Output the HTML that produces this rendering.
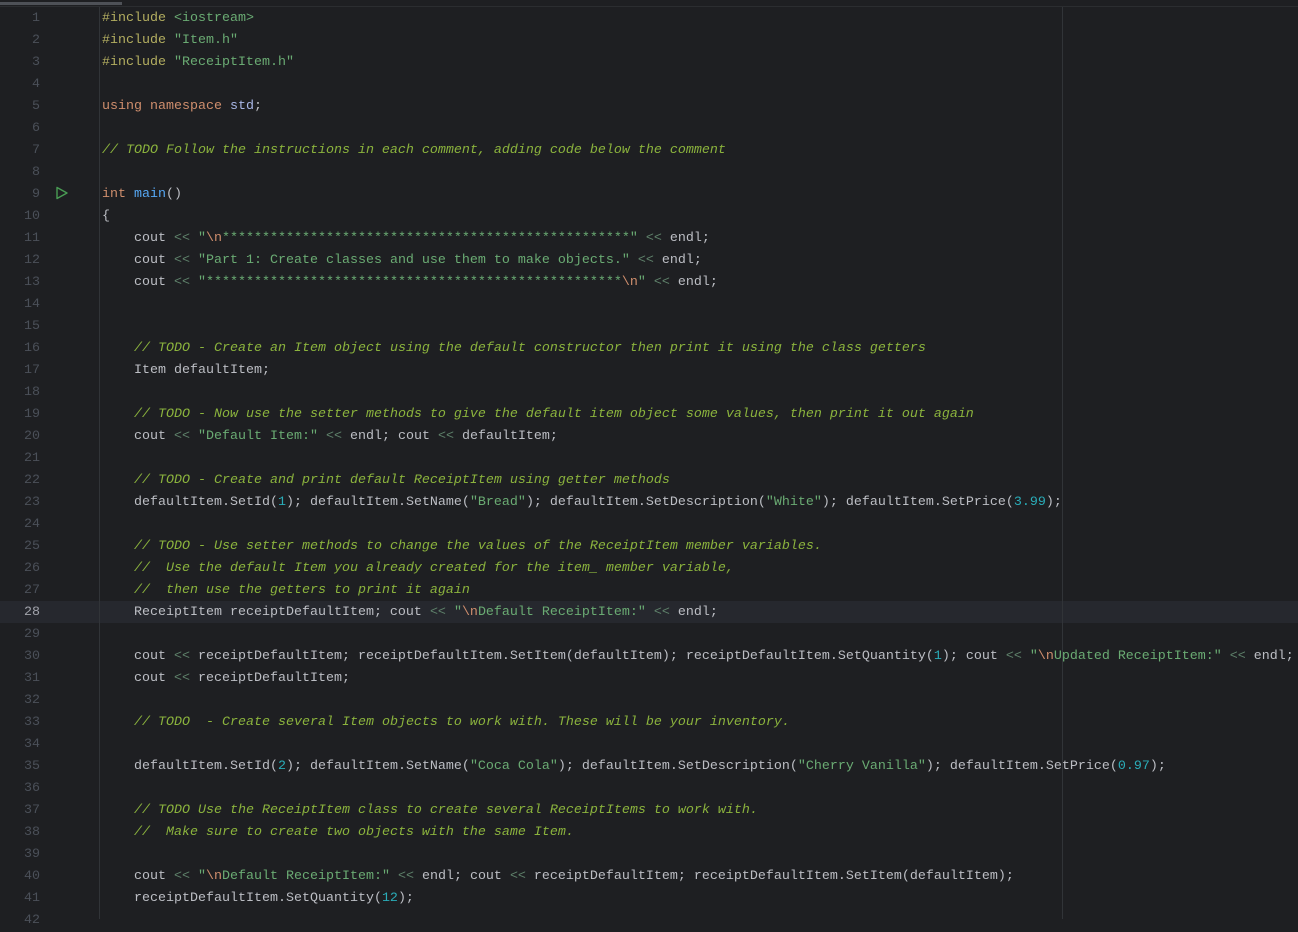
<!DOCTYPE html>
<html><head><meta charset="utf-8"><style>
html,body{margin:0;padding:0;width:1298px;height:919px;overflow:hidden;background:#1e1f22;}
#top{position:absolute;left:0;top:0;width:1298px;height:6px;background:#1e1f22;border-bottom:1px solid #2b2d30;}
#tab{position:absolute;left:0;top:2px;width:122px;height:3px;background:#4e5157;}
#sep{position:absolute;left:99px;top:7px;width:1px;height:912px;background:#313438;}
#margin{position:absolute;left:1062px;top:7px;width:1px;height:912px;background:#313438;}
#cur{position:absolute;left:0;top:601px;width:1298px;height:22px;background:#26282e;}
.ln{position:absolute;left:0;width:40px;text-align:right;font:13.333px "Liberation Mono",monospace;color:#4b5059;line-height:22px;}
.code{position:absolute;left:102px;font:13.333px "Liberation Mono",monospace;color:#bcbec4;line-height:22px;white-space:pre;}
.k{color:#cf8e6d}.s{color:#6aab73}.e{color:#cf8e6d}.o{color:#5f826b}.n{color:#2aacb8}.m{color:#b3ae60}.f{color:#56a8f5}.c{color:#7a7e85;font-style:italic}.t{color:#8bb33d;font-style:italic}.st{color:#c77dbb}
#run{position:absolute;left:55px;top:186px;}
</style></head><body>
<div id="top"></div><div id="tab"></div>
<div id="cur"></div>
<div id="sep"></div><div id="margin"></div>
<svg id="run" width="14" height="14" viewBox="0 0 14 14"><path d="M2 1.5 L12 7 L2 12.5 Z" fill="none" stroke="#499c54" stroke-width="1.4" stroke-linejoin="round"/></svg>
<div class="ln" style="top:8px">1<br>2<br>3<br>4<br>5<br>6<br>7<br>8<br>9<br>10<br>11<br>12<br>13<br>14<br>15<br>16<br>17<br>18<br>19<br>20<br>21<br>22<br>23<br>24<br>25<br>26<br>27<br><span style="color:#a1a3ab">28</span><br>29<br>30<br>31<br>32<br>33<br>34<br>35<br>36<br>37<br>38<br>39<br>40<br>41<br>42</div>
<div class="code" style="top:8px"><span class="m">#include</span> <span class="s">&lt;iostream&gt;</span>
<span class="m">#include</span> <span class="s">"Item.h"</span>
<span class="m">#include</span> <span class="s">"ReceiptItem.h"</span>

<span class="k">using namespace</span> <span style="color:#a9b7e6">std</span>;

<span class="t">// TODO Follow the instructions in each comment, adding code below the comment</span>

<span class="k">int</span> <span class="f">main</span>()
{
    cout <span class="o">&lt;&lt;</span> <span class="s">"<span class="e">\n</span>***************************************************"</span> <span class="o">&lt;&lt;</span> endl;
    cout <span class="o">&lt;&lt;</span> <span class="s">"Part 1: Create classes and use them to make objects."</span> <span class="o">&lt;&lt;</span> endl;
    cout <span class="o">&lt;&lt;</span> <span class="s">"****************************************************<span class="e">\n</span>"</span> <span class="o">&lt;&lt;</span> endl;


    <span class="t">// TODO - Create an Item object using the default constructor then print it using the class getters</span>
    Item defaultItem;

    <span class="t">// TODO - Now use the setter methods to give the default item object some values, then print it out again</span>
    cout <span class="o">&lt;&lt;</span> <span class="s">"Default Item:"</span> <span class="o">&lt;&lt;</span> endl; cout <span class="o">&lt;&lt;</span> defaultItem;

    <span class="t">// TODO - Create and print default ReceiptItem using getter methods</span>
    defaultItem.SetId(<span class="n">1</span>); defaultItem.SetName(<span class="s">"Bread"</span>); defaultItem.SetDescription(<span class="s">"White"</span>); defaultItem.SetPrice(<span class="n">3.99</span>);

    <span class="t">// TODO - Use setter methods to change the values of the ReceiptItem member variables.</span>
    <span class="t">//  Use the default Item you already created for the item_ member variable,</span>
    <span class="t">//  then use the getters to print it again</span>
    ReceiptItem receiptDefaultItem; cout <span class="o">&lt;&lt;</span> <span class="s">"<span class="e">\n</span>Default ReceiptItem:"</span> <span class="o">&lt;&lt;</span> endl;

    cout <span class="o">&lt;&lt;</span> receiptDefaultItem; receiptDefaultItem.SetItem(defaultItem); receiptDefaultItem.SetQuantity(<span class="n">1</span>); cout <span class="o">&lt;&lt;</span> <span class="s">"<span class="e">\n</span>Updated ReceiptItem:"</span> <span class="o">&lt;&lt;</span> endl;
    cout <span class="o">&lt;&lt;</span> receiptDefaultItem;

    <span class="t">// TODO  - Create several Item objects to work with. These will be your inventory.</span>

    defaultItem.SetId(<span class="n">2</span>); defaultItem.SetName(<span class="s">"Coca Cola"</span>); defaultItem.SetDescription(<span class="s">"Cherry Vanilla"</span>); defaultItem.SetPrice(<span class="n">0.97</span>);

    <span class="t">// TODO Use the ReceiptItem class to create several ReceiptItems to work with.</span>
    <span class="t">//  Make sure to create two objects with the same Item.</span>

    cout <span class="o">&lt;&lt;</span> <span class="s">"<span class="e">\n</span>Default ReceiptItem:"</span> <span class="o">&lt;&lt;</span> endl; cout <span class="o">&lt;&lt;</span> receiptDefaultItem; receiptDefaultItem.SetItem(defaultItem);
    receiptDefaultItem.SetQuantity(<span class="n">12</span>);
</div>
</body></html>
